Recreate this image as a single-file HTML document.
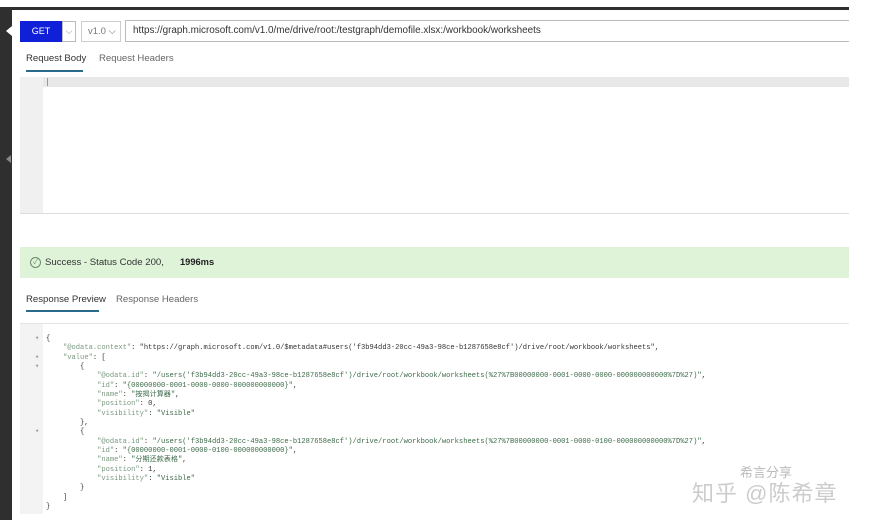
<!DOCTYPE html>
<html><head><meta charset="utf-8"><style>
*{margin:0;padding:0;box-sizing:border-box}
body{width:877px;height:527px;background:#fff;position:relative;overflow:hidden;font-family:"Liberation Sans","Noto Sans CJK SC",sans-serif}
.a{position:absolute}
.code{font-family:"Liberation Mono","Noto Sans CJK SC",monospace;font-size:7.1px;color:#333;white-space:pre;line-height:9.33px}
.k{color:#7a9a80}.s{color:#3c6a48}
</style></head><body>
<div class="a" style="left:0;top:7px;width:849px;height:3px;background:#2f2f2f"></div>
<div class="a" style="left:0;top:7px;width:12px;height:513px;background:#2f2f2f"></div>
<div class="a" style="left:6px;top:26px;width:0;height:0;border-top:5px solid transparent;border-bottom:5px solid transparent;border-right:6px solid #fff"></div>
<div class="a" style="left:6px;top:155px;width:0;height:0;border-top:4px solid transparent;border-bottom:4px solid transparent;border-right:5px solid #888"></div>
<div class="a" style="left:20px;top:21px;width:42px;height:21px;background:#1020d8;color:#fff;font-size:9px;text-align:center;line-height:21px">GET</div>
<div class="a" style="left:62px;top:21px;width:14px;height:21px;border:1px solid #bbb;color:#888;font-size:9px;text-align:center;line-height:18px">⌵</div>
<div class="a" style="left:81px;top:21px;width:40px;height:21px;border:1px solid #ccc;color:#777;font-size:9.5px;line-height:19px;padding-left:6px">v1.0 ⌵</div>
<div class="a" style="left:125px;top:20px;width:724px;height:22px;border:1px solid #bbb;border-right:none;color:#333;font-size:9.9px;line-height:20px;padding-left:7px">https://graph.microsoft.com/v1.0/me/drive/root:/testgraph/demofile.xlsx:/workbook/worksheets</div>
<div class="a" style="left:26px;top:53px;font-size:9.6px;color:#333">Request Body</div>
<div class="a" style="left:99px;top:53px;font-size:9.6px;color:#666">Request Headers</div>
<div class="a" style="left:26px;top:70px;width:57px;height:2px;background:#2a6a8a"></div>
<div class="a" style="left:20px;top:77px;width:829px;height:137px;border:1px solid #ddd;border-right:none;background:#fff"></div>
<div class="a" style="left:20px;top:77px;width:23px;height:136px;background:#f0f0f0"></div>
<div class="a" style="left:43px;top:77px;width:806px;height:10px;background:#e8e8e8"></div>
<div class="a" style="left:47px;top:78px;width:1px;height:8px;background:#999"></div>
<div class="a" style="left:20px;top:247px;width:829px;height:31px;background:#dff3d9"></div>
<div class="a" style="left:30px;top:257px;width:11px;height:11px;border:1px solid #6a8a6a;border-radius:50%;font-size:7px;color:#6a8a6a;text-align:center;line-height:9px">✓</div>
<div class="a" style="left:45px;top:257px;font-size:9.6px;color:#333">Success - Status Code 200,</div>
<div class="a" style="left:180px;top:257px;font-size:9.3px;color:#222;font-weight:bold">1996ms</div>
<div class="a" style="left:26px;top:294px;font-size:9.6px;color:#333">Response Preview</div>
<div class="a" style="left:116px;top:294px;font-size:9.6px;color:#666">Response Headers</div>
<div class="a" style="left:26px;top:310px;width:73px;height:2px;background:#2a6a8a"></div>
<div class="a" style="left:20px;top:323px;width:829px;height:1px;background:#e4e4e4"></div>
<div class="a" style="left:20px;top:324px;width:23px;height:190px;background:#f3f3f3"></div>
<div class="a code" style="left:35px;top:335px;color:#999">▾
 
▾
▾
 
 
 
 
 
 
▾</div>
<div class="a code" style="left:46px;top:335px">{
    <span class="k">"@odata.context"</span>: "https://graph.microsoft.com/v1.0/$metadata#users('f3b94dd3-20cc-49a3-98ce-b1287658e8cf')/drive/root/workbook/worksheets",
    <span class="k">"value"</span>: [
        {
            <span class="k">"@odata.id"</span>: <span class="s">"/users('f3b94dd3-20cc-49a3-98ce-b1287658e8cf')/drive/root/workbook/worksheets(%27%7B00000000-0001-0000-0000-000000000000%7D%27)"</span>,
            <span class="k">"id"</span>: <span class="s">"{00000000-0001-0000-0000-000000000000}"</span>,
            <span class="k">"name"</span>: <span class="s">"按揭计算器"</span>,
            <span class="k">"position"</span>: 0,
            <span class="k">"visibility"</span>: <span class="s">"Visible"</span>
        },
        {
            <span class="k">"@odata.id"</span>: <span class="s">"/users('f3b94dd3-20cc-49a3-98ce-b1287658e8cf')/drive/root/workbook/worksheets(%27%7B00000000-0001-0000-0100-000000000000%7D%27)"</span>,
            <span class="k">"id"</span>: <span class="s">"{00000000-0001-0000-0100-000000000000}"</span>,
            <span class="k">"name"</span>: <span class="s">"分期还款表格"</span>,
            <span class="k">"position"</span>: 1,
            <span class="k">"visibility"</span>: <span class="s">"Visible"</span>
        }
    ]
}</div>
<div class="a" style="left:740px;top:462px;font-size:13px;color:#bbb">希言分享</div>
<div class="a" style="left:692px;top:476px;font-size:22px;color:#ccc;letter-spacing:1px">知乎 @陈希章</div>
</body></html>
